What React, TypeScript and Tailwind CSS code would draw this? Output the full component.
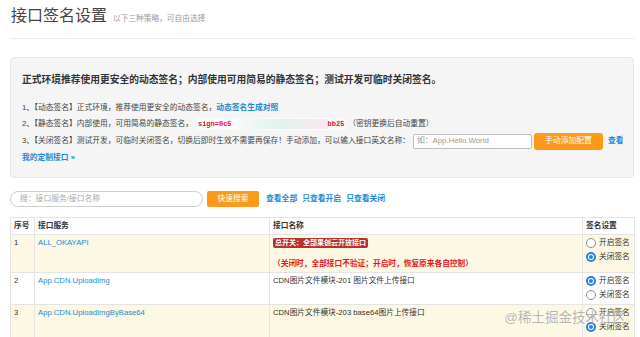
import React from 'react'

//Types
interface ApiRow {
    id: number
    service: string
    name?: string
    master?: boolean
    enabled: boolean
}

//Data
const rows: ApiRow[] = [
    { id: 1, service: 'ALL_OKAYAPI', master: true, enabled: false },
    { id: 2, service: 'App.CDN.UploadImg', name: 'CDN图片文件模块-201 图片文件上传接口', enabled: true },
    { id: 3, service: 'App.CDN.UploadImgByBase64', name: 'CDN图片文件模块-203 base64图片上传接口', enabled: false },
]

//Components
const Radio = ({ checked, label }: { checked: boolean; label: string }) => {
    return (
        <div className="flex h-[14px] items-center gap-[3px]">
            {checked ? (
                <span className="flex h-[10px] w-[10px] items-center justify-center rounded-full border-[2px] border-[#2a7fdc] bg-white">
                    <span className="h-[4px] w-[4px] rounded-full bg-[#2a7fdc]" />
                </span>
            ) : (
                <span className="h-[10px] w-[10px] rounded-full border border-[#8e8e8e] bg-white" />
            )}
            <span>{label}</span>
        </div>
    )
}

const App = () => {
    return (
        <div className="relative h-[337px] w-[640px] overflow-hidden bg-white pl-[10px] pr-[6px] font-['Liberation_Sans','Noto_Sans_CJK_SC',sans-serif] text-[#333]">
            {/* Header */}
            <div className="flex h-[39px] items-start border-b border-[#ececec] pl-[1px] pt-[5px]">
                <h1 className="text-[16px] leading-[22px] font-normal text-[#444]">接口签名设置</h1>
                <span className="ml-[6px] mt-[9px] text-[7.7px] leading-[10px] text-[#9a9a9a]">以下三种策略，可自由选择</span>
            </div>

            {/* Strategy box */}
            <div className="mt-[18px] rounded-[4px] border border-[#e6e6e6] bg-[#f5f5f5] pb-[11px] pl-[11px] pt-[14px]">
                <div className="text-[9.75px] leading-[16px] font-bold text-[#333]">
                    正式环境推荐使用更安全的动态签名；内部使用可用简易的静态签名；测试开发可临时关闭签名。
                </div>
                <div className="mt-[12px] text-[7.75px] leading-[16px] text-[#444]">
                    <div>
                        1、【动态签名】正式环境，推荐使用更安全的动态签名，
                        <span className="font-bold text-[#1f89d3]">动态签名生成对照</span>
                    </div>
                    <div className="flex items-center">
                        <span>2、【静态签名】内部使用，可用简易的静态签名，</span>
                        <span className="ml-[3px] flex h-[12px] items-center rounded-[2px] bg-[#fafafa] px-[2px] font-['Liberation_Mono',monospace] text-[7px] font-bold text-[#dd1144]">
                            <span>sign=0c5</span>
                            <span className="h-[10px] w-[96px] bg-gradient-to-r from-transparent via-[#dff3ef] to-[#fbe9ef]" />
                            <span>bb25</span>
                        </span>
                        <span className="ml-[2px]">（密钥更换后自动重置）</span>
                    </div>
                    <div className="flex h-[18px] items-center">
                        <span>3、【关闭签名】测试开发，可临时关闭签名，切换后即时生效不需要再保存！手动添加，可以输入接口英文名称：</span>
                        <div className="ml-[3px] flex h-[15px] w-[119px] items-center rounded-[2px] border border-[#bdbdbd] bg-white pl-[3px] text-[7.8px] text-[#999]">
                            如：App.Hello.World
                        </div>
                        <button className="ml-[2px] h-[17px] w-[69px] rounded-[3px] bg-[#fc9a1c] text-[7.8px] text-white">手动添加配置</button>
                        <span className="ml-[5px] font-bold text-[#1f89d3]">查看</span>
                    </div>
                    <div className="font-bold text-[#1f89d3]">我的定制接口 »</div>
                </div>
            </div>

            {/* Search */}
            <div className="mt-[13px] flex h-[16px] items-center text-[7.8px]">
                <div className="flex h-[16px] w-[193px] items-center rounded-full border border-[#cfcfcf] bg-white pl-[9px] text-[#aaa]">
                    搜：接口服务/接口名称
                </div>
                <button className="ml-[4px] h-[16px] w-[52px] rounded-[2px] bg-[#fc9a1c] text-[7.8px] text-white">快速搜索</button>
                <div className="ml-[7px] flex gap-[5px] font-bold text-[#1f89d3]">
                    <span>查看全部</span>
                    <span>只查看开启</span>
                    <span>只查看关闭</span>
                </div>
            </div>

            {/* Table */}
            <table className="mt-[10px] w-[624px] table-fixed border-collapse border border-[#e4e4e4] text-[7.7px] leading-[14px] text-[#333]">
                <colgroup>
                    <col className="w-[24px]" />
                    <col className="w-[235px]" />
                    <col className="w-[313px]" />
                    <col className="w-[52px]" />
                </colgroup>
                <thead>
                    <tr className="h-[17px] bg-white text-left font-bold">
                        <th className="border-r border-b border-[#e4e4e4] px-[3px]">序号</th>
                        <th className="border-r border-b border-[#e4e4e4] px-[3px]">接口服务</th>
                        <th className="border-r border-b border-[#e4e4e4] px-[3px]">接口名称</th>
                        <th className="border-b border-[#e4e4e4] px-[3px]">签名设置</th>
                    </tr>
                </thead>
                <tbody>
                    {rows.map((row) => (
                        <tr
                            key={row.id}
                            className={row.id === 2 ? 'h-[32px] bg-white' : row.id === 1 ? 'h-[38px] bg-[#fcf8e3]' : 'h-[33px] bg-[#fcf8e3]'}
                        >
                            <td className="border-r border-b border-[#e4e4e4] px-[3px] pt-[1px] align-top">{row.id}</td>
                            <td className="border-r border-b border-[#e4e4e4] px-[3px] pt-[1px] align-top text-[#1f89d3]">{row.service}</td>
                            <td className="border-r border-b border-[#e4e4e4] px-[3px] pt-[1px] align-top">
                                {row.master ? (
                                    <div>
                                        <div className="flex h-[14px] items-center">
                                            <span className="rounded-[2px] bg-[#b8312f] px-[2px] text-[7px] leading-[10px] font-bold text-white">
                                                总开关：全部果创云开放接口
                                            </span>
                                        </div>
                                        <div className="mt-[7px] font-bold text-[#e8161b]">（关闭时，全部接口不验证；开启时，恢复原来各自控制）</div>
                                    </div>
                                ) : (
                                    row.name
                                )}
                            </td>
                            <td className="border-b border-[#e4e4e4] px-[3px] pt-[1px] align-top">
                                <Radio checked={row.enabled} label="开启签名" />
                                <Radio checked={!row.enabled} label="关闭签名" />
                            </td>
                        </tr>
                    ))}
                </tbody>
            </table>

            {/* Watermark */}
            <div className="absolute bottom-[11px] right-[14px] text-[13.5px] leading-[16px] text-[rgba(120,120,120,0.55)] [text-shadow:0_0_2px_rgba(255,255,255,0.9)]">
                @稀土掘金技术社区
            </div>
        </div>
    )
}

export default App
